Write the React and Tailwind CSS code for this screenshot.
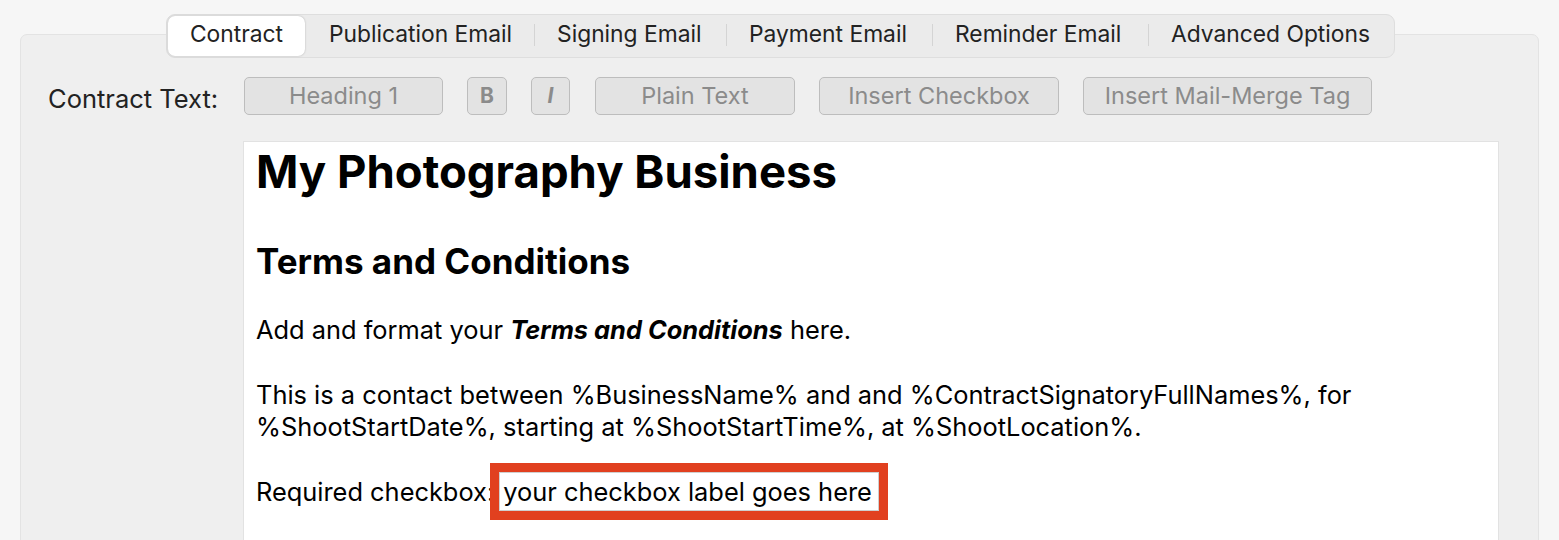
import React from "react";

const font = { fontFamily: "Inter, 'Noto Sans', sans-serif" };

function Sep() {
  return <div className="w-px h-[22px] bg-[#d4d4d4]" />;
}

export default function App() {
  const tabs = ["Publication Email", "Signing Email", "Payment Email", "Reminder Email", "Advanced Options"];
  const btn =
    "h-[38px] rounded-[5px] border border-[#bdbdbd] bg-[#e3e3e3] text-[#8b8b8b] text-[23.5px] flex items-center justify-center";
  return (
    <div className="w-[1559px] h-[540px] overflow-hidden bg-[#f6f6f6] relative" style={font}>
      <div className="absolute left-[20px] top-[34px] w-[1519px] h-[600px] rounded-[7px] border border-[#e3e3e3] bg-[#efefef]" />
      <div className="relative flex flex-col">
        <div className="pt-[14px] pl-[166px] flex">
          <div className="flex items-center h-[44px] w-[1229px] rounded-[9px] border border-[#dedede] bg-[#ebebeb] pl-[1px] text-[22.8px] text-[#222]">
            <div className="w-[137px] h-[40px] pb-[3px] rounded-[7px] bg-white shadow-[0_0_2px_rgba(0,0,0,0.25)] flex items-center justify-center">
              Contract
            </div>
            <div className="flex items-center pb-[3px]">
              <div className="ml-[24px] w-[183px] whitespace-nowrap">{tabs[0]}</div>
              <div className="mx-[22px]"><Sep /></div>
              <div className="w-[147px] whitespace-nowrap">{tabs[1]}</div>
              <div className="mx-[22px]"><Sep /></div>
              <div className="w-[161px] whitespace-nowrap">{tabs[2]}</div>
              <div className="mx-[22px]"><Sep /></div>
              <div className="w-[171px] whitespace-nowrap">{tabs[3]}</div>
              <div className="mx-[22px]"><Sep /></div>
              <div className="whitespace-nowrap">{tabs[4]}</div>
            </div>
          </div>
        </div>
        <div className="flex items-center mt-[19px] h-[38px]">
          <div className="pl-[48px] w-[244px] text-[25.5px] text-[#222] mt-[6px] whitespace-nowrap">Contract Text:</div>
          <div className={btn + " w-[199px]"}>Heading 1</div>
          <div className={btn + " w-[40px] ml-[24px] font-bold !text-[21px]"}>B</div>
          <div className={btn + " w-[39px] ml-[24px] font-bold italic !text-[21px]"}>I</div>
          <div className={btn + " w-[200px] ml-[25px]"}>Plain Text</div>
          <div className={btn + " w-[240px] ml-[24px]"}>Insert Checkbox</div>
          <div className={btn + " w-[289px] ml-[24px]"}>Insert Mail-Merge Tag</div>
        </div>
        <div className="ml-[243px] mt-[26px] w-[1256px] h-[420px] bg-white border border-[#e2e2e2] pl-[12px] text-black">
          <div className="text-[45.5px] font-bold leading-[60px] whitespace-nowrap">My Photography Business</div>
          <div className="text-[35px] font-bold leading-[44px] mt-[37px] whitespace-nowrap">Terms and Conditions</div>
          <div className="text-[25.4px] leading-[32px] mt-[31px] whitespace-nowrap">
            Add and format your <span className="font-bold italic">Terms and Conditions</span> here.
          </div>
          <div className="text-[25.4px] leading-[32px] mt-[33px] whitespace-nowrap">
            This is a contact between %BusinessName% and and %ContractSignatoryFullNames%, for
            <br />
            %ShootStartDate%, starting at %ShootStartTime%, at %ShootLocation%.
          </div>
          <div className="text-[25.4px] leading-[32px] mt-[20px] h-[57px] flex items-center whitespace-nowrap">
            <span>Required checkbox:</span>
            <span className="border-[9px] border-[#e1401f] -ml-[4px]">
              <span className="block border border-[#cfcfcf] bg-white pl-[3px] pr-[6px] leading-[37px] h-[39px]">your checkbox label goes here</span>
            </span>
          </div>
        </div>
      </div>
    </div>
  );
}
